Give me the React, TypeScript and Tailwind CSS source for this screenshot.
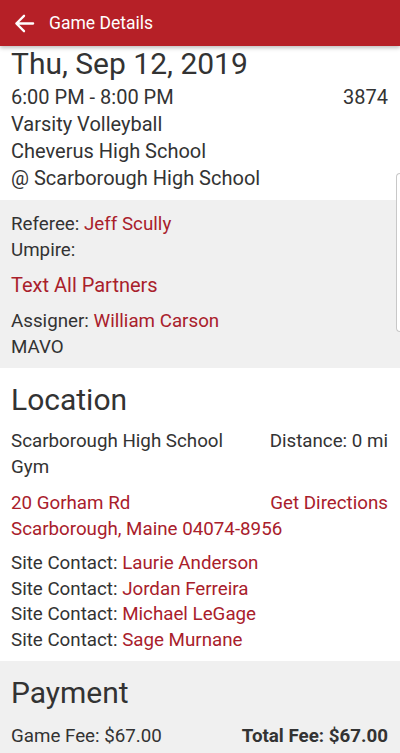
import React from 'react';

const red = 'text-[#a9202b]';

const Contact = ({ name }: { name: string }) => (
  <div>
    Site Contact: <span className={red}>{name}</span>
  </div>
);

const App = () => {
  return (
    <div className="relative min-h-[753px] bg-white font-['Roboto',sans-serif] text-[18.75px] text-[#333]">
      <header className="relative z-10 flex h-[46px] items-center bg-[#b62027] shadow-[0_2px_4px_rgba(0,0,0,0.25)]">
        <svg className="ml-[13px] h-[23px] w-[23px]" viewBox="0 0 24 24" fill="none" stroke="white" strokeWidth="2.4" strokeLinecap="round" strokeLinejoin="round">
          <path d="M21 12H3.5M11.5 4l-8 8 8 8" />
        </svg>
        <h1 className="ml-[13px] text-[17.5px] text-white">Game Details</h1>
      </header>

      <section className="px-[11px] pt-[1px] pb-[8px]">
        <div className="text-[30px] leading-[34px]">Thu, Sep 12, 2019</div>
        <div className="mt-[3px] text-[20px] leading-[27px]">
          <div className="flex justify-between pr-[1px]">
            <span>6:00 PM - 8:00 PM</span>
            <span>3874</span>
          </div>
          <div>Varsity Volleyball</div>
          <div>Cheverus High School</div>
          <div>@ Scarborough High School</div>
        </div>
      </section>

      <section className="bg-[#f0f0f0] px-[11px] pt-[11px] pb-[8px] leading-[26px]">
        <div>
          Referee: <span className={red}>Jeff Scully</span>
        </div>
        <div>Umpire:</div>
        <div className={`mt-[9px] text-[20px] ${red}`}>Text All Partners</div>
        <div className="mt-[10px]">
          Assigner: <span className={red}>William Carson</span>
        </div>
        <div>MAVO</div>
      </section>

      <section className="px-[11px] pt-[14px] pb-[8px]">
        <h2 className="text-[30px] leading-[36px]">Location</h2>
        <div className="mt-[10px] leading-[26px]">
          <div className="flex justify-between whitespace-nowrap">
            <span>Scarborough High School</span>
            <span className="pr-[1px]">Distance: 0 mi</span>
          </div>
          <div>Gym</div>
        </div>
        <div className={`mt-[10px] leading-[26px] ${red}`}>
          <div className="flex justify-between whitespace-nowrap">
            <span>20 Gorham Rd</span>
            <span className="pr-[1px]">Get Directions</span>
          </div>
          <div className="whitespace-nowrap">Scarborough, Maine 04074-8956</div>
        </div>
        <div className="mt-[9px] leading-[25.5px]">
          <Contact name="Laurie Anderson" />
          <Contact name="Jordan Ferreira" />
          <Contact name="Michael LeGage" />
          <Contact name="Sage Murnane" />
        </div>
      </section>

      <section className="bg-[#f0f0f0] px-[11px] pt-[14px] pb-[8px]">
        <h2 className="text-[30px] leading-[36px]">Payment</h2>
        <div className="mt-[12px] flex justify-between leading-[26px]">
          <span>Game Fee: $67.00</span>
          <span className="pr-[1px] font-bold">Total Fee: $67.00</span>
        </div>
      </section>

      <div className="absolute right-0 top-[173px] h-[159px] w-[4px] rounded-l-[4px] border border-r-0 border-[#c8c8c8] bg-white" />
    </div>
  );
};

export default App;
